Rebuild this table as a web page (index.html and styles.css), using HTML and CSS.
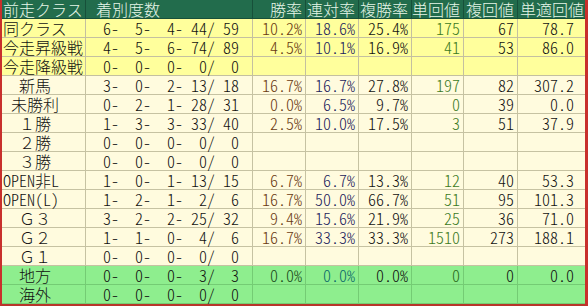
FILE: index.html
```html
<!DOCTYPE html>
<html lang="ja">
<head>
<meta charset="utf-8">
<title>前走クラス</title>
<link rel="stylesheet" href="styles.css">
</head>
<body>
<div class="frame">
<table class="stats">
<colgroup>
<col class="c1"><col class="c2"><col class="c3"><col class="c4"><col class="c5"><col class="c6"><col class="c7"><col class="c8">
</colgroup>
<thead>
<tr>
<th class="lbl">前走クラス</th><th class="deg">着別度数</th><th>勝率</th><th>連対率</th><th>複勝率</th><th>単回値</th><th>複回値</th><th class="last">単適回値</th>
</tr>
</thead>
<tbody>
<tr class="yel"><td class="lbl">同クラス</td><td class="deg"><span class="f">6-</span><span class="f">5-</span><span class="f">4-</span><span class="f">44/</span><span class="g">59</span></td><td class="win">10.2%</td><td class="ren">18.6%</td><td>25.4%</td><td class="tan">175</td><td>67</td><td class="last">78.7</td></tr>
<tr class="yel"><td class="lbl">今走昇級戦</td><td class="deg"><span class="f">4-</span><span class="f">5-</span><span class="f">6-</span><span class="f">74/</span><span class="g">89</span></td><td class="win">4.5%</td><td class="ren">10.1%</td><td>16.9%</td><td class="tan">41</td><td>53</td><td class="last">86.0</td></tr>
<tr class="yel"><td class="lbl">今走降級戦</td><td class="deg"><span class="f">0-</span><span class="f">0-</span><span class="f">0-</span><span class="f">0/</span><span class="g">0</span></td><td></td><td></td><td></td><td></td><td></td><td class="last"></td></tr>
<tr><td class="lbl ind2">新馬</td><td class="deg"><span class="f">3-</span><span class="f">0-</span><span class="f">2-</span><span class="f">13/</span><span class="g">18</span></td><td class="win">16.7%</td><td class="ren">16.7%</td><td>27.8%</td><td class="tan">197</td><td>82</td><td class="last">307.2</td></tr>
<tr><td class="lbl ind1">未勝利</td><td class="deg"><span class="f">0-</span><span class="f">2-</span><span class="f">1-</span><span class="f">28/</span><span class="g">31</span></td><td class="win">0.0%</td><td class="ren">6.5%</td><td>9.7%</td><td class="tan">0</td><td>39</td><td class="last">0.0</td></tr>
<tr><td class="lbl ind2">１勝</td><td class="deg"><span class="f">1-</span><span class="f">3-</span><span class="f">3-</span><span class="f">33/</span><span class="g">40</span></td><td class="win">2.5%</td><td class="ren">10.0%</td><td>17.5%</td><td class="tan">3</td><td>51</td><td class="last">37.9</td></tr>
<tr><td class="lbl ind2">２勝</td><td class="deg"><span class="f">0-</span><span class="f">0-</span><span class="f">0-</span><span class="f">0/</span><span class="g">0</span></td><td></td><td></td><td></td><td></td><td></td><td class="last"></td></tr>
<tr><td class="lbl ind2">３勝</td><td class="deg"><span class="f">0-</span><span class="f">0-</span><span class="f">0-</span><span class="f">0/</span><span class="g">0</span></td><td></td><td></td><td></td><td></td><td></td><td class="last"></td></tr>
<tr><td class="lbl half">OPEN非L</td><td class="deg"><span class="f">1-</span><span class="f">0-</span><span class="f">1-</span><span class="f">13/</span><span class="g">15</span></td><td class="win">6.7%</td><td class="ren">6.7%</td><td>13.3%</td><td class="tan">12</td><td>40</td><td class="last">53.3</td></tr>
<tr><td class="lbl half">OPEN(L)</td><td class="deg"><span class="f">1-</span><span class="f">2-</span><span class="f">1-</span><span class="f">2/</span><span class="g">6</span></td><td class="win">16.7%</td><td class="ren">50.0%</td><td>66.7%</td><td class="tan">51</td><td>95</td><td class="last">101.3</td></tr>
<tr><td class="lbl ind2">Ｇ３</td><td class="deg"><span class="f">3-</span><span class="f">2-</span><span class="f">2-</span><span class="f">25/</span><span class="g">32</span></td><td class="win">9.4%</td><td class="ren">15.6%</td><td>21.9%</td><td class="tan">25</td><td>36</td><td class="last">71.0</td></tr>
<tr><td class="lbl ind2">Ｇ２</td><td class="deg"><span class="f">1-</span><span class="f">1-</span><span class="f">0-</span><span class="f">4/</span><span class="g">6</span></td><td class="win">16.7%</td><td class="ren">33.3%</td><td>33.3%</td><td class="tan">1510</td><td>273</td><td class="last">188.1</td></tr>
<tr><td class="lbl ind2">Ｇ１</td><td class="deg"><span class="f">0-</span><span class="f">0-</span><span class="f">0-</span><span class="f">0/</span><span class="g">0</span></td><td></td><td></td><td></td><td></td><td></td><td class="last"></td></tr>
<tr class="grn"><td class="lbl ind2">地方</td><td class="deg"><span class="f">0-</span><span class="f">0-</span><span class="f">0-</span><span class="f">3/</span><span class="g">3</span></td><td class="win">0.0%</td><td class="ren">0.0%</td><td>0.0%</td><td class="tan">0</td><td>0</td><td class="last">0.0</td></tr>
<tr class="grn"><td class="lbl ind2">海外</td><td class="deg"><span class="f">0-</span><span class="f">0-</span><span class="f">0-</span><span class="f">0/</span><span class="g">0</span></td><td></td><td></td><td></td><td></td><td></td><td class="last"></td></tr>
</tbody>
</table>
</div>
</body>
</html>
```

FILE: styles.css
```css
html, body {
  margin: 0;
  padding: 0;
  background: #ffffff;
}

.frame {
  width: 588px;
  height: 306px;
  box-sizing: border-box;
  border-left: 2px solid #c8302c;
  border-right: 3px solid #c8302c;
  border-bottom: 2px solid #b8352a;
  overflow: hidden;
}

.stats {
  table-layout: fixed;
  border-collapse: separate;
  border-spacing: 0;
  width: 583px;
  font-family: "Noto Sans CJK JP", sans-serif;
  font-size: 16px;
  font-weight: 300;
  line-height: 18px;
  color: #111111;
}

.c1 { width: 84px; }
.c2 { width: 167px; }
.c3 { width: 53px; }
.c4 { width: 53px; }
.c5 { width: 53px; }
.c6 { width: 52px; }
.c7 { width: 54px; }
.c8 { width: 67px; }

.stats th,
.stats td {
  box-sizing: border-box;
  height: 19px;
  padding: 0 3px 0 0;
  text-align: right;
  white-space: pre;
  vertical-align: middle;
  font-feature-settings: "hwid" 1;
  border-right: 1px solid #c6c2a2;
  border-bottom: 1px solid #c6c2a2;
  background: #fffbde;
}

.stats th {
  font-weight: 300;
  color: #e6f6e8;
  background: #226c4c;
  border-right-color: #17503a;
  border-bottom-color: #17503a;
}

.stats .last {
  border-right: none;
  padding-right: 11px;
}

.stats th.last {
  padding-right: 1px;
}

.stats .lbl {
  text-align: left;
  padding: 0 0 0 1px;
  font-feature-settings: normal;
}

.stats .lbl.half {
  font-feature-settings: "hwid" 1;
}

.stats .ind1 { padding-left: 9px; }
.stats .ind2 { padding-left: 17px; }

.stats .deg {
  text-align: left;
  padding: 0 0 0 1px;
}

.stats th.deg {
  padding-left: 10px;
}

.f {
  display: inline-block;
  width: 32px;
  text-align: right;
}

.g {
  display: inline-block;
  width: 24px;
  text-align: right;
}

.win { color: #6a3a12; }
.ren { color: #1c1c5c; }
.tan { color: #3c7a1e; }

.yel td {
  background: #ffff9c;
  border-color: #c4c0a0;
}

.grn td {
  background: #8eee8e;
  border-right-color: #74cc74;
  border-bottom-color: #74cc74;
}

.grn .win { color: #1a4a1a; }
.grn .ren { color: #0a6a6a; }
.grn .tan { color: #2a6a1a; }
```
